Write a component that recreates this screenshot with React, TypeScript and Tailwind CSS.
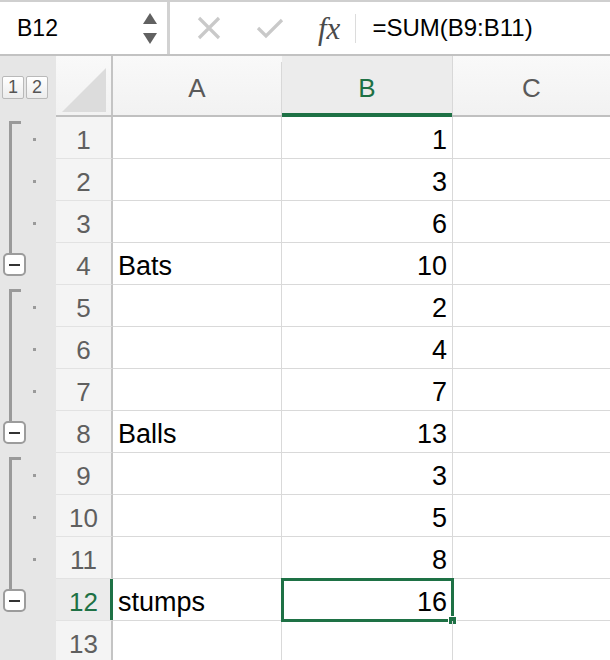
import type { ReactNode } from 'react';

type Row = {
  n: number;
  a?: string;
  b?: string;
  kind: 'first' | 'detail' | 'sum' | 'none';
};

const ROWS: Row[] = [
  { n: 1, b: '1', kind: 'first' },
  { n: 2, b: '3', kind: 'detail' },
  { n: 3, b: '6', kind: 'detail' },
  { n: 4, a: 'Bats', b: '10', kind: 'sum' },
  { n: 5, b: '2', kind: 'first' },
  { n: 6, b: '4', kind: 'detail' },
  { n: 7, b: '7', kind: 'detail' },
  { n: 8, a: 'Balls', b: '13', kind: 'sum' },
  { n: 9, b: '3', kind: 'first' },
  { n: 10, b: '5', kind: 'detail' },
  { n: 11, b: '8', kind: 'detail' },
  { n: 12, a: 'stumps', b: '16', kind: 'sum' },
  { n: 13, kind: 'none' },
];

const SANS = { fontFamily: '"Liberation Sans", Arial, sans-serif' };

function OutlineCell({ kind }: { kind: Row['kind'] }) {
  if (kind === 'none') return <div className="h-[42px]" />;
  if (kind === 'sum') {
    return (
      <div className="flex h-[42px] flex-col pl-[3px]">
        <div className="ml-[6px] h-[10px] w-[3px] bg-[#9a9a9a]" />
        <div className="flex h-[23px] w-[23px] items-center justify-center rounded-[5px] border-2 border-[#9c9c9c] bg-white">
          <div className="h-[2px] w-[11px] bg-[#333]" />
        </div>
      </div>
    );
  }
  return (
    <div className="flex h-[42px] pl-[9px]">
      {kind === 'first' ? (
        <div className="mt-[4px] h-[38px] w-[12px] border-l-[3px] border-t-[3px] border-[#9a9a9a]" />
      ) : (
        <div className="h-[42px] w-[12px] border-l-[3px] border-[#9a9a9a]" />
      )}
      <div className="ml-[12px] mt-[21px] h-[3px] w-[3px] bg-[#9a9a9a]" />
    </div>
  );
}

function IconBtn({ children }: { children: ReactNode }) {
  return <div className="flex items-center justify-center">{children}</div>;
}

export default function App() {
  return (
    <div className="h-[660px] w-[610px] overflow-hidden bg-white" style={SANS}>
      {/* formula bar */}
      <div className="flex h-[56px] border-b-2 border-t-2 border-[#cfcfcf] border-b-[#c2c2c2]">
        <div className="flex w-[167px] items-center justify-between pl-[17px] pr-[10px]">
          <span className="text-[23px] text-black">B12</span>
          <div className="flex flex-col gap-[9px]">
            <svg width="14" height="11" viewBox="0 0 14 11">
              <path d="M7 0 L14 11 L0 11 Z" fill="#616161" />
            </svg>
            <svg width="14" height="11" viewBox="0 0 14 11">
              <path d="M0 0 L14 0 L7 11 Z" fill="#616161" />
            </svg>
          </div>
        </div>
        <div className="w-[3px] bg-[#d2d2d2]" />
        <div className="flex flex-1 items-center">
          <div className="ml-[27px]">
            <IconBtn>
              <svg width="24" height="24" viewBox="0 0 24 24">
                <path d="M2 2 L22 22 M22 2 L2 22" stroke="#c9c9c9" strokeWidth="3.2" />
              </svg>
            </IconBtn>
          </div>
          <div className="ml-[35px]">
            <svg width="28" height="22" viewBox="0 0 28 22">
              <path d="M2 11 L10 19 L26 3" stroke="#c9c9c9" strokeWidth="3.2" fill="none" />
            </svg>
          </div>
          <span
            className="ml-[34px] text-[31px] italic leading-none text-[#4a4a4a]"
            style={{ fontFamily: '"Liberation Serif", "Times New Roman", serif' }}
          >
            fx
          </span>
          <div className="ml-[15px] h-[29px] w-px bg-[#dcdcdc]" />
          <span className="ml-[16px] text-[24px] text-black">=SUM(B9:B11)</span>
        </div>
      </div>

      <div className="flex">
        {/* outline gutter */}
        <div className="w-[56px] shrink-0 bg-[#e6e6e6]">
          <div className="flex h-[61px] items-start gap-[2px] pl-[2px] pt-[20px]">
            {['1', '2'].map((l) => (
              <div
                key={l}
                className="flex h-[23px] w-[22px] items-center justify-center rounded-[2px] border border-[#b9b9b9] bg-gradient-to-b from-white to-[#ececec] text-[18px] text-[#555]"
              >
                {l}
              </div>
            ))}
          </div>
          {ROWS.map((r) => (
            <OutlineCell key={r.n} kind={r.kind} />
          ))}
        </div>

        {/* sheet */}
        <div className="flex-1">
          <div className="flex h-[61px] border-b-2 border-[#c0c0c0] bg-gradient-to-b from-[#f9f9f9] to-[#f2f2f2] pt-[6px] text-[26px] text-[#5a5a5a]">
            <div className="-mt-[6px] flex w-[57px] shrink-0 items-end justify-end border-r-2 border-[#c4c4c4] pb-[3px] pr-[5px]">
              <svg width="44" height="44" viewBox="0 0 44 44">
                <path d="M44 0 L44 44 L0 44 Z" fill="#dcdcdc" />
              </svg>
            </div>
            <div className="flex w-[169px] shrink-0 items-center justify-center border-r border-[#d8d8d8]">A</div>
            <div className="relative -mt-[6px] flex w-[171px] shrink-0 items-center justify-center border-r border-[#d8d8d8] bg-[#ececec] pt-[6px] text-[#1e7145]">
              B
              <div className="absolute -bottom-[2px] left-0 right-0 h-[4px] bg-[#1e7145]" />
            </div>
            <div className="flex flex-1 items-center justify-center">C</div>
          </div>

          {ROWS.map((r) => {
            const sel = r.n === 12;
            return (
              <div key={r.n} className="flex h-[42px] text-[27px]">
                <div
                  className={`relative flex w-[57px] shrink-0 items-center justify-center border-b border-r-2 border-b-[#e2e2e2] border-r-[#c4c4c4] pt-[5px] text-[26px] ${
                    sel ? 'bg-[#ebebeb] text-[#1e7145]' : 'bg-[#f4f4f4] text-[#5f5f5f]'
                  }`}
                >
                  {r.n}
                  {sel && <div className="absolute -right-[2px] top-0 h-full w-[3px] bg-[#1e7145]" />}
                </div>
                <div className="flex w-[169px] shrink-0 items-center border-b border-r border-[#d9d9d9] pl-[5px] pt-[5px] text-black">
                  {r.a}
                </div>
                <div className="relative flex w-[171px] shrink-0 items-center justify-end border-b border-r border-[#d9d9d9] pr-[5px] pt-[5px] text-black">
                  {r.b}
                  {sel && (
                    <>
                      <div className="absolute -left-px -top-px bottom-[-2px] right-[-2px] border-[3px] border-[#1e7145]" />
                      <div className="absolute -bottom-[5px] -right-[5px] h-[9px] w-[9px] border border-white bg-[#1e7145]" />
                    </>
                  )}
                </div>
                <div className="flex-1 border-b border-[#d9d9d9]" />
              </div>
            );
          })}
        </div>
      </div>
    </div>
  );
}
